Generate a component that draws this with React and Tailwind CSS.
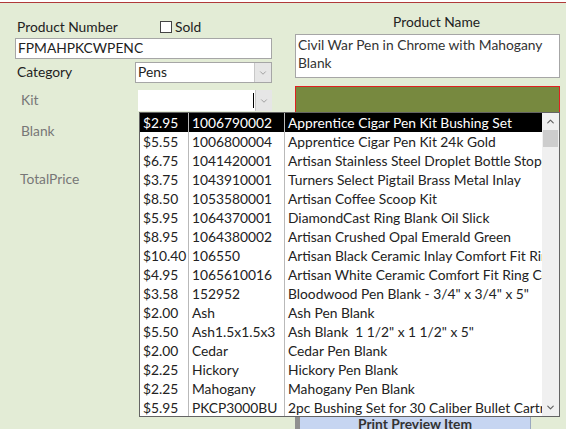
import { ChevronDown, ChevronUp } from "lucide-react";

const rows = [
  ["$2.95", "1006790002", "Apprentice Cigar Pen Kit Bushing Set"],
  ["$5.55", "1006800004", "Apprentice Cigar Pen Kit 24k Gold"],
  ["$6.75", "1041420001", "Artisan Stainless Steel Droplet Bottle Stopper"],
  ["$3.75", "1043910001", "Turners Select Pigtail Brass Metal Inlay"],
  ["$8.50", "1053580001", "Artisan Coffee Scoop Kit"],
  ["$5.95", "1064370001", "DiamondCast Ring Blank Oil Slick"],
  ["$8.95", "1064380002", "Artisan Crushed Opal Emerald Green"],
  ["$10.40", "106550", "Artisan Black Ceramic Inlay Comfort Fit Ring"],
  ["$4.95", "1065610016", "Artisan White Ceramic Comfort Fit Ring Core"],
  ["$3.58", "152952", 'Bloodwood Pen Blank - 3/4" x 3/4" x 5"'],
  ["$2.00", "Ash", "Ash Pen Blank"],
  ["$5.50", "Ash1.5x1.5x3", 'Ash Blank  1 1/2" x 1 1/2" x 5"'],
  ["$2.00", "Cedar", "Cedar Pen Blank"],
  ["$2.25", "Hickory", "Hickory Pen Blank"],
  ["$2.25", "Mahogany", "Mahogany Pen Blank"],
  ["$5.95", "PKCP3000BU", "2pc Bushing Set for 30 Caliber Bullet Cartridge"],
];

const font = { fontFamily: "Lato, 'Open Sans', sans-serif" };

const DropButton = () => (
  <div className="flex h-full w-[17px] items-center justify-center border-l border-[#c8c8c8] bg-[#e6e6e6]">
    <ChevronDown className="h-[10px] w-[10px] text-[#777]" strokeWidth={1.5} />
  </div>
);

const App = () => {
  return (
    <div
      className="relative h-[429px] w-[566px] overflow-hidden bg-[#e3ecd6] text-[13.8px] text-[#222]"
      style={font}
    >
      <div className="h-[2px] bg-white" />
      <div className="h-px bg-[#b03a3a]" />

      <div className="flex pl-[15px]">
        {/* left column */}
        <div className="flex w-[257px] flex-col">
          <div className="mt-[16px] flex h-4 items-center leading-4">
            <span className="ml-[2px] w-[143px]">Product Number</span>
            <span className="h-3 w-3 border border-[#444] bg-white" />
            <span className="ml-[3px]">Sold</span>
          </div>
          <div className="mt-[3px] flex h-[21px] items-center border border-[#a6a6a6] bg-white pl-[2px] text-[#222]">
            FPMAHPKCWPENC
          </div>
          <div className="mt-[3px] flex h-[21px] items-center">
            <span className="ml-[2px] w-[118px]">Category</span>
            <div className="flex h-full w-[137px] items-center border border-[#a6a6a6] bg-white">
              <span className="flex-1 pl-[2px]">Pens</span>
              <DropButton />
            </div>
          </div>
          <div className="mt-[7px] flex h-[21px] items-center">
            <span className="ml-[6px] w-[117px] text-[#777]">Kit</span>
            <div className="flex h-full w-[134px] items-center bg-white">
              <span className="flex-1" />
              <span className="mr-px h-[15px] w-px bg-black" />
              <DropButton />
            </div>
          </div>
          <div className="mt-[12px] ml-[6px] h-4 leading-4 text-[#777]">Blank</div>
          <div className="mt-[32px] ml-[5px] h-4 leading-4 text-[#777]">TotalPrice</div>
        </div>

        {/* right column */}
        <div className="ml-[23px] flex w-[265px] flex-col">
          <div className="mt-[11px] ml-[98px] h-4 leading-4">Product Name</div>
          <div className="mt-[4px] h-[44px] border border-[#a6a6a6] bg-white px-[2px] pt-px leading-[18px] text-[#333]">
            Civil War Pen in Chrome with Mahogany Blank
          </div>
          <div className="mt-[8px] h-[320px] border border-[#e02020] bg-[#77893f]" />
          <div className="mt-[4px] flex h-[30px] w-[236px] border-l-[5px] border-r border-[#8f8f8f] border-r-[#9aa8c0] bg-[#c6d5f1]">
            <span className="mt-[4px] flex-1 text-center font-bold text-[#333]">Print Preview Item</span>
          </div>
        </div>
      </div>

      {/* open drop-down list */}
      <div className="absolute left-[139px] top-[112px] flex h-[305px] w-[421px] border border-[#646464] bg-white">
        <div className="min-w-0 flex-1 overflow-hidden">
          {rows.map((r, i) => (
            <div
              key={i}
              className={`flex h-[19px] items-center whitespace-pre leading-[19px] ${
                i === 0 ? "bg-black text-white" : "text-[#222]"
              }`}
            >
              <span className="h-full w-[49px] shrink-0 border-r border-[#b9b9b9] pl-[3px]">{r[0]}</span>
              <span className="h-full w-[96px] shrink-0 border-r border-[#b9b9b9] pl-[3px]">{r[1]}</span>
              <span className="h-full min-w-0 flex-1 overflow-hidden pl-[3px]">{r[2]}</span>
            </div>
          ))}
        </div>
        <div className="flex w-[17px] shrink-0 flex-col bg-[#f0f0f0]">
          <div className="flex h-[17px] items-center justify-center">
            <ChevronUp className="h-[11px] w-[11px] text-[#606060]" strokeWidth={2.5} />
          </div>
          <div className="mx-px h-[17px] bg-[#cdcdcd]" />
          <div className="flex-1" />
          <div className="flex h-[17px] items-center justify-center">
            <ChevronDown className="h-[11px] w-[11px] text-[#606060]" strokeWidth={2.5} />
          </div>
        </div>
      </div>
    </div>
  );
};

export default App;
